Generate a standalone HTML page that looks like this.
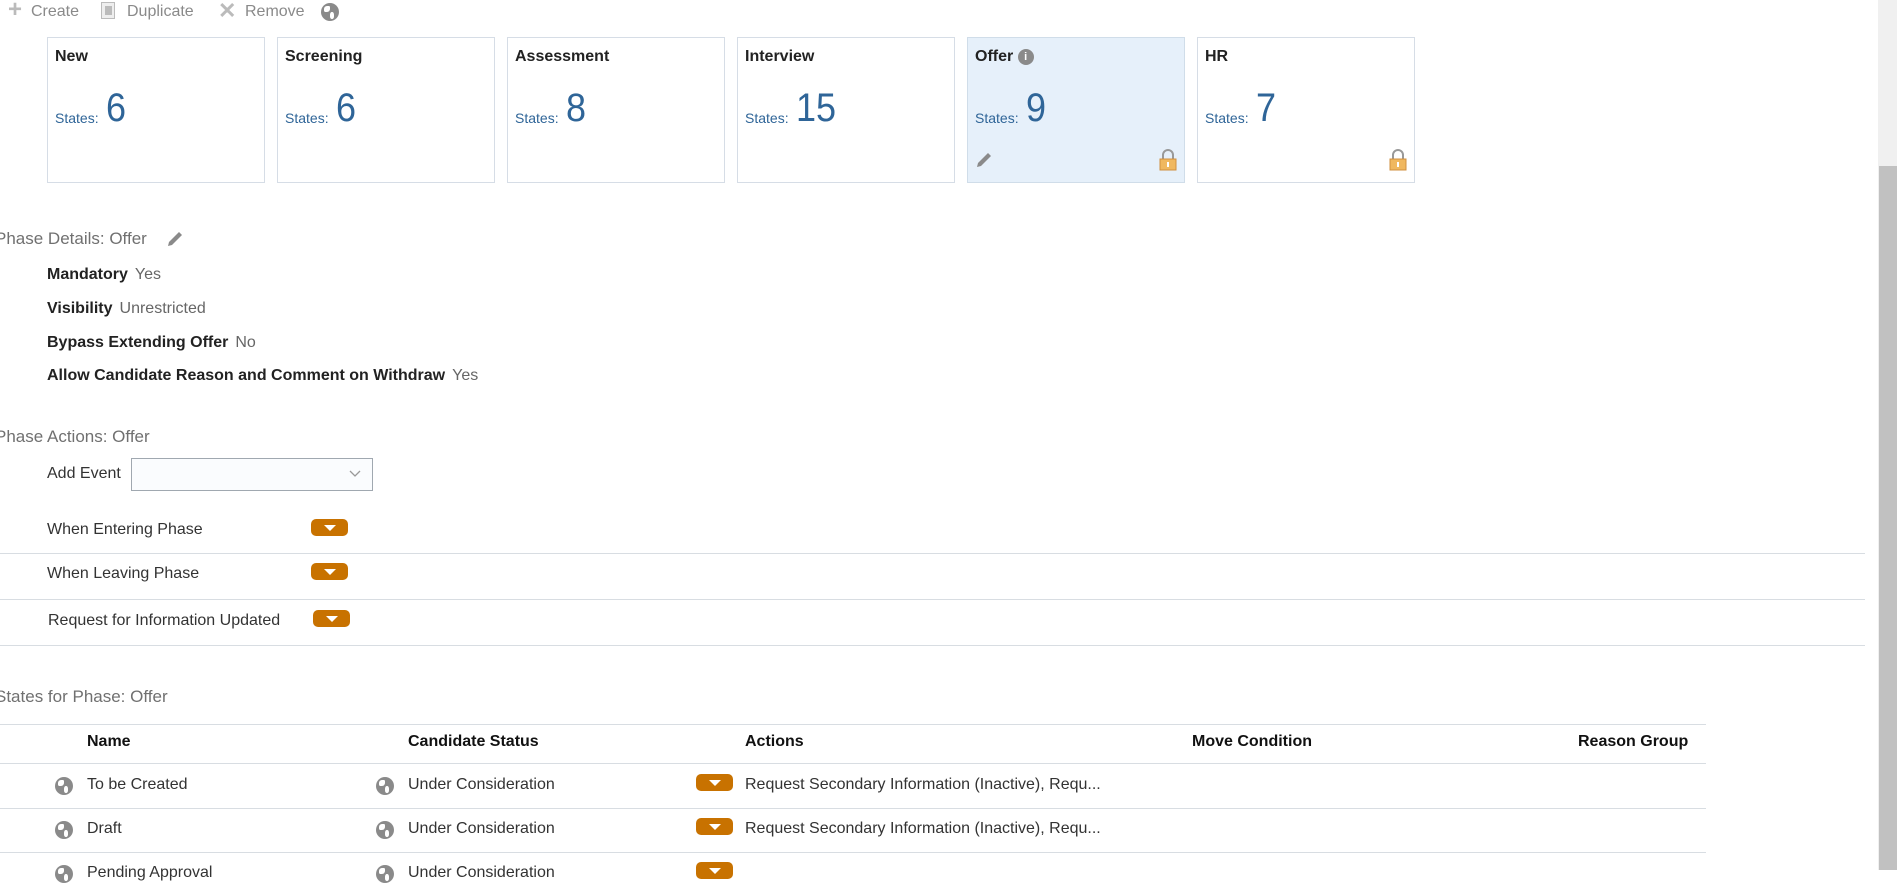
<!DOCTYPE html>
<html><head><meta charset="utf-8"><style>
*{margin:0;padding:0;box-sizing:border-box}
body{width:1897px;height:870px;overflow:hidden;background:#fff;font-family:"Liberation Sans",sans-serif;color:#333;position:relative}
.a{position:absolute;white-space:nowrap}
.tb{color:#8a8a8a;font-size:16px;top:3px}
.card{position:absolute;top:37px;width:218px;height:146px;border:1px solid #d6dde6;background:#fff}
.card.sel{background:#e6f0fa;border-color:#d0dde9}
.card .t{position:absolute;left:7px;top:10px;font-weight:bold;font-size:16px;color:#222}
.card .s{position:absolute;left:7px;top:72px;font-size:14px;color:#2f6598}
.card .n{position:absolute;left:58px;top:48px;font-size:40px;color:#2f6598;transform:scaleX(0.9);transform-origin:left}
.sec{font-size:17px;color:#707070;left:-5px}
.lb{font-weight:bold;font-size:16px;color:#222;left:47px}
.lb span{font-weight:normal;color:#666;margin-left:7px}
.ev{font-size:16px;color:#333;left:47px}
.ob{position:absolute;width:37px;height:17px;background:#c87200;border-radius:5px}
.ob:after{content:"";position:absolute;left:13px;top:6px;border-left:6px solid transparent;border-right:6px solid transparent;border-top:6px solid #fff}
.hl{position:absolute;left:0;height:1px;background:#d8dde2}
.th{font-weight:bold;font-size:16px;color:#111;top:733px}
.td{font-size:16px;color:#333}
.gl{position:absolute;width:18px;height:18px;border-radius:50%;background:#8a8a8a;overflow:hidden}
.gl:before{content:"";position:absolute;left:3px;top:3px;width:6px;height:6px;background:#fff;border-radius:50% 20% 50% 30%}
.gl:after{content:"";position:absolute;left:9px;top:9px;width:4px;height:7px;background:#fff;border-radius:40%}
</style></head><body>
<!-- toolbar -->
<div class="a tb" style="left:8px;font-size:24px;top:-4px;color:#bbb;font-weight:bold">+</div>
<div class="a tb" style="left:31px">Create</div>
<div class="a" style="left:101px;top:2px;width:14px;height:17px;border:1px solid #bbb;background:#eee"><div style="position:absolute;left:3px;top:3px;width:7px;height:9px;background:#bbb"></div></div>
<div class="a tb" style="left:127px">Duplicate</div>
<div class="a tb" style="left:218px;top:-2px;font-size:22px;color:#bbb;font-weight:bold">✕</div>
<div class="a tb" style="left:245px">Remove</div>
<div class="gl" style="left:321px;top:3px"></div>
<!-- cards -->
<div class="card" style="left:47px"><div class="t">New</div><div class="s">States:</div><div class="n">6</div></div>
<div class="card" style="left:277px"><div class="t">Screening</div><div class="s">States:</div><div class="n">6</div></div>
<div class="card" style="left:507px"><div class="t">Assessment</div><div class="s">States:</div><div class="n">8</div></div>
<div class="card" style="left:737px"><div class="t">Interview</div><div class="s">States:</div><div class="n">15</div></div>
<div class="card sel" style="left:967px"><div class="t">Offer <span style="display:inline-block;width:16px;height:16px;border-radius:50%;background:#8a8a8a;color:#fff;font-size:11px;text-align:center;line-height:16px;vertical-align:1px">i</span></div><div class="s">States:</div><div class="n">9</div>
<svg style="position:absolute;left:6px;top:112px" width="20" height="20" viewBox="0 0 20 20"><path d="M3 17 L4 13 L14 3 L17 6 L7 16 Z" fill="#8a8a8a"/></svg>
<svg style="position:absolute;left:191px;top:111px" width="18" height="22" viewBox="0 0 18 22"><path d="M4 10 V6 a5 5 0 0 1 10 0 V10" fill="none" stroke="#999" stroke-width="2"/><rect x="1" y="10" width="16" height="11" fill="#f0b860" stroke="#d09040"/><rect x="8" y="13" width="2" height="5" fill="#fff"/></svg></div>
<div class="card" style="left:1197px"><div class="t">HR</div><div class="s">States:</div><div class="n">7</div>
<svg style="position:absolute;left:191px;top:111px" width="18" height="22" viewBox="0 0 18 22"><path d="M4 10 V6 a5 5 0 0 1 10 0 V10" fill="none" stroke="#999" stroke-width="2"/><rect x="1" y="10" width="16" height="11" fill="#f0b860" stroke="#d09040"/><rect x="8" y="13" width="2" height="5" fill="#fff"/></svg></div>
<!-- scrollbar -->
<div class="a" style="left:1878px;top:0;width:19px;height:870px;background:#f0f0f0"></div>
<div class="a" style="left:1879px;top:166px;width:18px;height:704px;background:#c1c1c1"></div>
<!-- details -->
<div class="a sec" style="top:229px">Phase Details: Offer</div>
<svg class="a" style="left:165px;top:229px" width="20" height="20" viewBox="0 0 20 20"><path d="M3 17 L4 13 L14 3 L17 6 L7 16 Z" fill="#8a8a8a"/></svg>
<div class="a lb" style="top:266px">Mandatory<span>Yes</span></div>
<div class="a lb" style="top:300px">Visibility<span>Unrestricted</span></div>
<div class="a lb" style="top:334px">Bypass Extending Offer<span>No</span></div>
<div class="a lb" style="top:367px">Allow Candidate Reason and Comment on Withdraw<span>Yes</span></div>
<div class="a sec" style="top:427px">Phase Actions: Offer</div>
<div class="a ev" style="top:465px">Add Event</div>
<div class="a" style="left:131px;top:458px;width:242px;height:33px;border:1px solid #a0a8b0;background:#fafcfe"></div>
<svg class="a" style="left:349px;top:470px" width="12" height="8" viewBox="0 0 12 8"><path d="M1 1 L6 6 L11 1" fill="none" stroke="#999" stroke-width="1.3"/></svg>
<div class="a ev" style="top:521px">When Entering Phase</div>
<div class="ob" style="left:311px;top:519px"></div>
<div class="hl" style="top:553px;width:1865px"></div>
<div class="a ev" style="top:565px">When Leaving Phase</div>
<div class="ob" style="left:311px;top:563px"></div>
<div class="hl" style="top:599px;width:1865px"></div>
<div class="a ev" style="left:48px;top:612px">Request for Information Updated</div>
<div class="ob" style="left:313px;top:610px"></div>
<div class="hl" style="top:645px;width:1865px"></div>
<!-- states -->
<div class="a sec" style="top:687px">States for Phase: Offer</div>
<div class="hl" style="top:724px;width:1706px"></div>
<div class="a th" style="left:87px">Name</div>
<div class="a th" style="left:408px">Candidate Status</div>
<div class="a th" style="left:745px">Actions</div>
<div class="a th" style="left:1192px">Move Condition</div>
<div class="a th" style="left:1578px">Reason Group</div>
<div class="hl" style="top:763px;width:1706px"></div>
<div class="gl" style="left:55px;top:777px"></div><div class="a td" style="left:87px;top:776px">To be Created</div>
<div class="gl" style="left:376px;top:777px"></div><div class="a td" style="left:408px;top:776px">Under Consideration</div>
<div class="ob" style="left:696px;top:774px"></div><div class="a td" style="left:745px;top:776px">Request Secondary Information (Inactive), Requ...</div>
<div class="hl" style="top:808px;width:1706px"></div>
<div class="gl" style="left:55px;top:821px"></div><div class="a td" style="left:87px;top:820px">Draft</div>
<div class="gl" style="left:376px;top:821px"></div><div class="a td" style="left:408px;top:820px">Under Consideration</div>
<div class="ob" style="left:696px;top:818px"></div><div class="a td" style="left:745px;top:820px">Request Secondary Information (Inactive), Requ...</div>
<div class="hl" style="top:852px;width:1706px"></div>
<div class="gl" style="left:55px;top:865px"></div><div class="a td" style="left:87px;top:864px">Pending Approval</div>
<div class="gl" style="left:376px;top:865px"></div><div class="a td" style="left:408px;top:864px">Under Consideration</div>
<div class="ob" style="left:696px;top:862px"></div>
</body></html>
